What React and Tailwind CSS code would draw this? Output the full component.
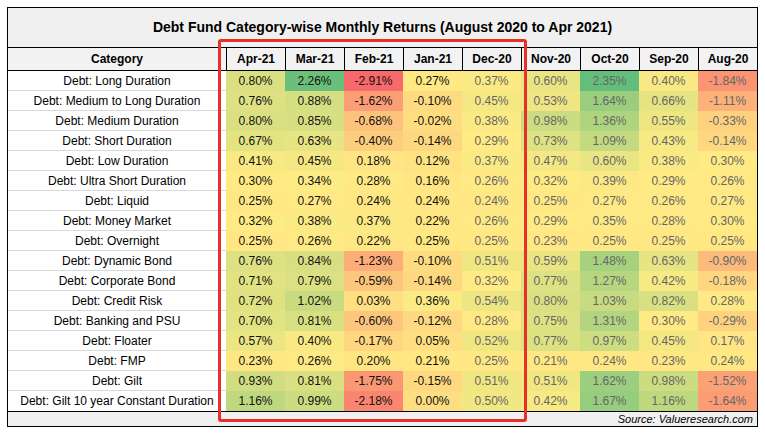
import React from 'react';

const months = ['Apr-21', 'Mar-21', 'Feb-21', 'Jan-21', 'Dec-20', 'Nov-20', 'Oct-20', 'Sep-20', 'Aug-20'];

const rows = [
  ['Debt: Long Duration', [0.80, 2.26, -2.91, 0.27, 0.37, 0.60, 2.35, 0.40, -1.84]],
  ['Debt: Medium to Long Duration', [0.76, 0.88, -1.62, -0.10, 0.45, 0.53, 1.64, 0.66, -1.11]],
  ['Debt: Medium Duration', [0.80, 0.85, -0.68, -0.02, 0.38, 0.98, 1.36, 0.55, -0.33]],
  ['Debt: Short Duration', [0.67, 0.63, -0.40, -0.14, 0.29, 0.73, 1.09, 0.43, -0.14]],
  ['Debt: Low Duration', [0.41, 0.45, 0.18, 0.12, 0.37, 0.47, 0.60, 0.38, 0.30]],
  ['Debt: Ultra Short Duration', [0.30, 0.34, 0.28, 0.16, 0.26, 0.32, 0.39, 0.29, 0.26]],
  ['Debt: Liquid', [0.25, 0.27, 0.24, 0.24, 0.24, 0.25, 0.27, 0.26, 0.27]],
  ['Debt: Money Market', [0.32, 0.38, 0.37, 0.22, 0.26, 0.29, 0.35, 0.28, 0.30]],
  ['Debt: Overnight', [0.25, 0.26, 0.22, 0.25, 0.25, 0.23, 0.25, 0.25, 0.25]],
  ['Debt: Dynamic Bond', [0.76, 0.84, -1.23, -0.10, 0.51, 0.59, 1.48, 0.63, -0.90]],
  ['Debt: Corporate Bond', [0.71, 0.79, -0.59, -0.14, 0.32, 0.77, 1.27, 0.42, -0.18]],
  ['Debt: Credit Risk', [0.72, 1.02, 0.03, 0.36, 0.54, 0.80, 1.03, 0.82, 0.28]],
  ['Debt: Banking and PSU', [0.70, 0.81, -0.60, -0.12, 0.28, 0.75, 1.31, 0.30, -0.29]],
  ['Debt: Floater', [0.57, 0.40, -0.17, 0.05, 0.52, 0.77, 0.97, 0.45, 0.17]],
  ['Debt: FMP', [0.23, 0.26, 0.20, 0.21, 0.25, 0.21, 0.24, 0.23, 0.24]],
  ['Debt: Gilt', [0.93, 0.81, -1.75, -0.15, 0.51, 0.51, 1.62, 0.98, -1.52]],
  ['Debt: Gilt 10 year Constant Duration', [1.16, 0.99, -2.18, 0.00, 0.50, 0.42, 1.67, 1.16, -1.64]],
];

// excel-style 3 colour scale across the whole table
const all = rows.flatMap((r) => r[1]).sort((a, b) => a - b);
const lo = all[0];
const hi = all[all.length - 1];
const mid = all[Math.floor(all.length / 2)];
const RED = [248, 105, 107];
const YEL = [255, 235, 132];
const GRN = [99, 190, 123];

function mix(a, b, t) {
  return `rgb(${a.map((v, i) => Math.round(v + (b[i] - v) * t)).join(',')})`;
}

function cellColor(v) {
  if (v >= mid) return mix(YEL, GRN, (v - mid) / (hi - mid));
  return mix(YEL, RED, (mid - v) / (mid - lo));
}

export default function App() {
  return (
    <div className="relative w-[765px] h-[433px] bg-white" style={{ fontFamily: '"Liberation Sans", Arial, sans-serif' }}>
      <div className="absolute left-[7px] top-[7px] w-[751px] border border-black">
        <div className="h-[40px] bg-[#f0f0f0] border-b border-black flex items-center justify-center text-[14px] font-bold text-black">
          Debt Fund Category-wise Monthly Returns (August 2020 to Apr 2021)
        </div>
        <div className="grid grid-cols-[218px_repeat(9,59px)] h-[23px] bg-[#f2f2f2] border-b border-black text-[12px] font-bold text-black">
          <div className="flex items-center justify-center">Category</div>
          {months.map((m) => (
            <div key={m} className="flex items-center justify-center border-l border-black">{m}</div>
          ))}
        </div>
        {rows.map(([name, vals], ri) => (
          <div key={name} className="grid grid-cols-[218px_repeat(9,59px)] h-[20px] text-[12px]">
            <div className={`flex items-center justify-center whitespace-nowrap text-black ${ri < rows.length - 1 ? 'border-b border-[#d9d9d9]' : ''}`}>
              {name}
            </div>
            {vals.map((v, ci) => (
              <div
                key={ci}
                className={`flex items-center justify-center ${ci < 4 ? 'text-[#111]' : 'text-[#666]'}`}
                style={{ backgroundColor: cellColor(v) }}
              >
                {v.toFixed(2)}%
              </div>
            ))}
          </div>
        ))}
        <div className="h-[15px] bg-[#f0f0f0] border-t border-black flex items-center justify-end pr-[4px] text-[11px] italic text-black leading-none">
          Source: Valueresearch.com
        </div>
      </div>
      <div className="absolute left-[218px] top-[39px] w-[309px] h-[383px] border-[3px] border-[#e8302a] rounded-[3px]" />
    </div>
  );
}
